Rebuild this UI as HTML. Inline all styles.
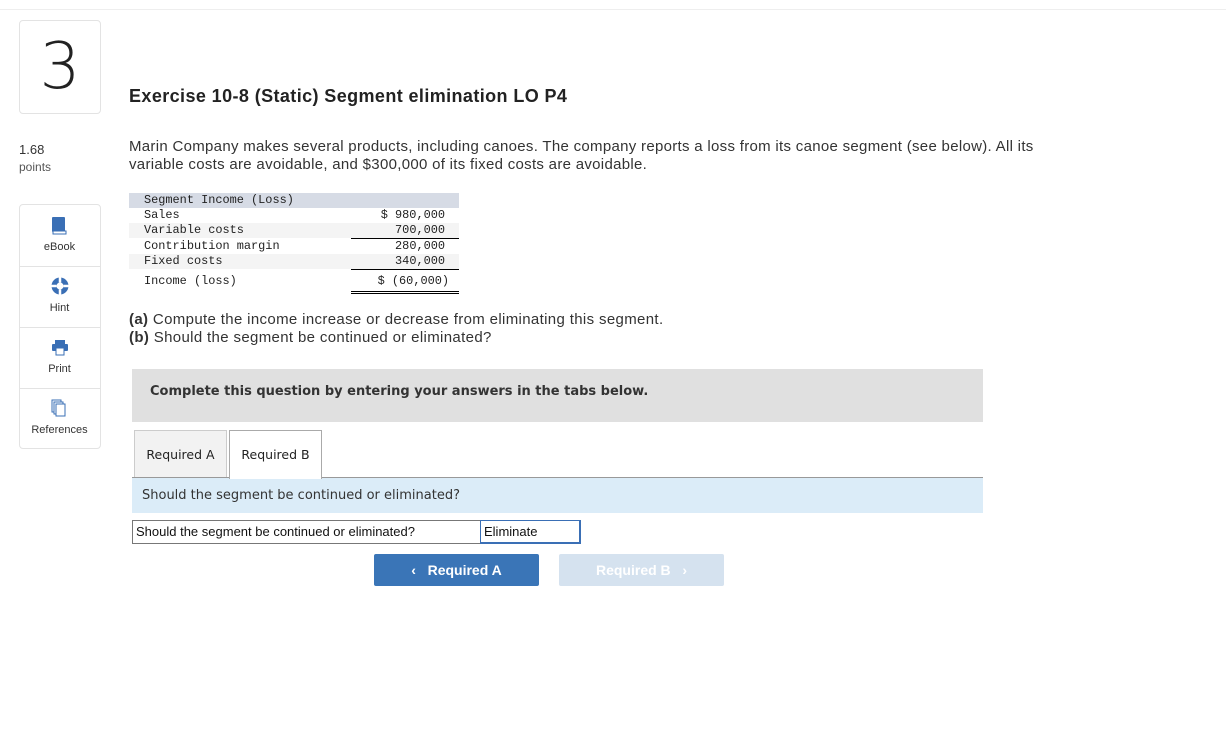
<!DOCTYPE html>
<html><head><style>
body{margin:0;width:1226px;height:733px;background:#fff;font-family:"Liberation Sans",sans-serif;position:relative;overflow:hidden;color:#222}
.a{position:absolute}
.mono{font-family:"Liberation Mono",monospace;font-size:11.9px;color:#222}
.row{position:absolute;left:129px;width:330px;height:15px}
.lbl{position:absolute;left:15px;top:0;line-height:15px}
.val{position:absolute;right:14px;top:0;line-height:15px}
.side{position:absolute;left:19px;width:81px;height:61px;border-bottom:1px solid #e3e3e3;text-align:center;font-size:11px;color:#333}
.side span{position:absolute;left:0;right:0;top:36px}
</style></head><body>
<div class="a" style="left:0;top:9px;width:1226px;height:1px;background:#eee"></div>
<div class="a" style="left:19px;top:20px;width:80px;height:92px;border:1px solid #e3e3e3;border-radius:4px;text-align:center;font-size:64px;line-height:92px;color:#222;font-family:'DejaVu Sans',sans-serif;font-weight:200">3</div>
<div class="a" style="left:129px;top:86px;font-size:18px;font-weight:bold;color:#222;letter-spacing:0.4px">Exercise 10-8 (Static) Segment elimination LO P4</div>
<div class="a" style="left:19px;top:141px;font-size:13px;line-height:17px;color:#333">1.68<br><span style="font-size:12px;color:#555">points</span></div>
<div class="a" style="left:129px;top:138px;font-size:15px;line-height:18px;color:#333;letter-spacing:0.3px">Marin Company makes several products, including canoes. The company reports a loss from its canoe segment (see below). All its<br>variable costs are avoidable, and $300,000 of its fixed costs are avoidable.</div>
<div class="mono">
<div class="row" style="top:193px;background:#d6dbe5"><span class="lbl">Segment Income (Loss)</span></div>
<div class="row" style="top:208px"><span class="lbl">Sales</span><span class="val">$ 980,000</span></div>
<div class="row" style="top:223px;background:#f4f4f4"><span class="lbl">Variable costs</span><span class="val">700,000</span></div>
<div class="a" style="left:351px;top:238px;width:108px;height:1px;background:#000"></div>
<div class="row" style="top:239px"><span class="lbl">Contribution margin</span><span class="val">280,000</span></div>
<div class="row" style="top:254px;background:#f4f4f4"><span class="lbl">Fixed costs</span><span class="val">340,000</span></div>
<div class="a" style="left:351px;top:269px;width:108px;height:1px;background:#000"></div>
<div class="row" style="top:274px"><span class="lbl">Income (loss)</span><span class="val" style="right:10px">$ (60,000)</span></div>
<div class="a" style="left:351px;top:291px;width:108px;height:3px;border-top:1px solid #000;border-bottom:1px solid #000;box-sizing:border-box"></div>
</div>
<div class="a" style="left:19px;top:204px;width:80px;height:243px;border:1px solid #e3e3e3;border-radius:4px"></div>
<div class="side" style="top:205px"><svg class="a" style="left:32px;top:12px" width="16" height="18"><rect x="1" y="0" width="13" height="15" rx="1" fill="#3a6fb5"/><rect x="2" y="14" width="13" height="3" fill="#fff" stroke="#3a6fb5"/></svg><span>eBook</span></div>
<div class="side" style="top:266px"><svg class="a" style="left:31px;top:10px" width="20" height="20"><circle cx="10" cy="10" r="8.5" fill="#3a6fb5"/><circle cx="10" cy="10" r="3.5" fill="#fff"/><path d="M10 1.5v5M10 13.5v5M1.5 10h5M13.5 10h5" stroke="#fff" stroke-width="2.5"/></svg><span>Hint</span></div>
<div class="side" style="top:327px"><svg class="a" style="left:32px;top:12px" width="18" height="18"><rect x="4" y="1" width="10" height="4" fill="#3a6fb5"/><rect x="1" y="5" width="16" height="7" rx="1" fill="#3a6fb5"/><rect x="5" y="9" width="8" height="7" fill="#fff" stroke="#3a6fb5"/></svg><span>Print</span></div>
<div class="side" style="top:388px;border:none"><svg class="a" style="left:32px;top:11px" width="16" height="20"><rect x="1" y="1" width="9" height="12" fill="#fff" stroke="#3a6fb5"/><rect x="3" y="3" width="9" height="12" fill="#fff" stroke="#3a6fb5"/><rect x="5" y="5" width="9" height="12" fill="#fff" stroke="#3a6fb5"/></svg><span>References</span></div>
<div class="a" style="left:129px;top:311px;font-size:15px;line-height:18px;color:#333;letter-spacing:0.35px"><b>(a)</b> Compute the income increase or decrease from eliminating this segment.<br><b>(b)</b> Should the segment be continued or eliminated?</div>
<div class="a" style="left:132px;top:369px;width:851px;height:53px;background:#e0e0e0"><div class="a" style="left:18px;top:15px;font-family:'DejaVu Sans',sans-serif;font-weight:bold;font-size:13px;color:#333">Complete this question by entering your answers in the tabs below.</div></div>
<div class="a" style="left:134px;top:430px;width:91px;height:47px;background:#f2f2f2;border:1px solid #ccc;border-bottom:none;font-family:'DejaVu Sans',sans-serif;font-size:12.5px;line-height:47px;text-align:center;color:#222">Required A</div>
<div class="a" style="left:229px;top:430px;width:91px;height:48px;background:#fff;border:1px solid #aaa;border-bottom:none;font-family:'DejaVu Sans',sans-serif;font-size:12.5px;line-height:47px;text-align:center;color:#222;z-index:2">Required B</div>
<div class="a" style="left:132px;top:477px;width:851px;height:1px;background:#999"></div>
<div class="a" style="left:132px;top:478px;width:851px;height:35px;background:#dbecf8;font-family:'DejaVu Sans',sans-serif;font-size:13px;line-height:36px;color:#333;text-indent:10px">Should the segment be continued or eliminated?</div>
<div class="a" style="left:132px;top:520px;width:347px;height:22px;border:1px solid #777;font-size:13px;line-height:22px;text-indent:3px;color:#111">Should the segment be continued or eliminated?</div>
<div class="a" style="left:480px;top:520px;width:98px;height:21px;border:1px solid #3a6fb5;border-width:1px 2px 2px 1px;font-size:13px;line-height:22px;text-indent:3px;color:#111">Eliminate</div>
<div class="a" style="left:374px;top:554px;width:165px;height:32px;background:#3a75b7;border-radius:2px;color:#fff;font-weight:bold;font-size:14px;line-height:32px;text-align:center">&#8249;&nbsp;&nbsp; Required A</div>
<div class="a" style="left:559px;top:554px;width:165px;height:32px;background:#d5e2ef;border-radius:2px;color:#fff;font-weight:bold;font-size:14px;line-height:32px;text-align:center">Required B &nbsp;&nbsp;&#8250;</div>
</body></html>
